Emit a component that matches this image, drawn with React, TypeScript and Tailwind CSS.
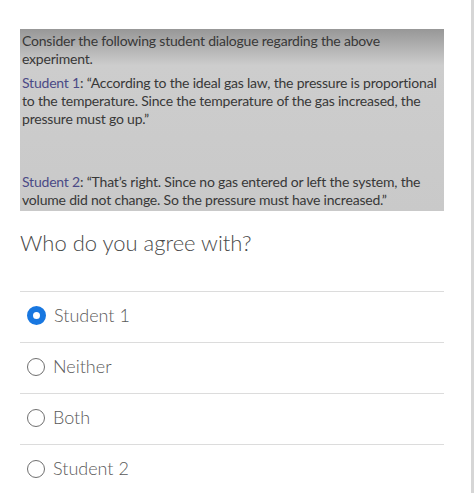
import React from "react";

const options = [
  { label: "Student 1", selected: true },
  { label: "Neither", selected: false },
  { label: "Both", selected: false },
  { label: "Student 2", selected: false },
];

function Radio({ selected }: { selected: boolean }) {
  if (selected) {
    return <span className="block h-[19px] w-[19px] shrink-0 rounded-full border-[6px] border-[#1877e0] bg-white" />;
  }
  return <span className="block h-[18px] w-[18px] shrink-0 rounded-full border-[1.5px] border-[#6f6f6f] bg-white" />;
}

export default function App() {
  return (
    <div className="flex h-[493px] w-[474px] overflow-hidden bg-white">
      <div className="w-[470px] pt-[29px]">
        <div
          className="ml-[20px] w-[424px] bg-gradient-to-b from-[#979797] via-[#cdcdcd] via-[20%] to-[#c9c9c9] pl-[2px] pr-[3px] pt-[3px] pb-[2px] text-[14px] leading-[18px] tracking-[-0.2px] text-[#383838]"
          style={{ fontFamily: "Lato, sans-serif" }}
        >
          <p>Consider the following student dialogue regarding the above experiment.</p>
          <p className="mt-[6px]">
            <span className="text-[#4b4a86]">Student 1</span>: “According to the ideal gas law, the pressure is proportional to the temperature. Since the temperature of the gas increased, the pressure must go up.”
          </p>
          <p className="mt-[45px]">
            <span className="text-[#4b4a86]">Student 2</span>: “That’s right. Since no gas entered or left the system, the volume did not change. So the pressure must have increased.”
          </p>
        </div>

        <div className="ml-[20px] w-[424px]" style={{ fontFamily: "Lato, sans-serif" }}>
          <h2 className="mt-[17px] text-[22px] font-light leading-[30px] text-[#4a4a4a]">Who do you agree with?</h2>
          <ul className="mt-[33px]">
            {options.map((o) => (
              <li key={o.label} className="flex h-[51px] items-center gap-[8px] border-t border-[#dcdcdc] pb-[3px] pl-[7px]">
                <Radio selected={o.selected} />
                <span className="text-[18px] font-light text-[#5a5a5a]">{o.label}</span>
              </li>
            ))}
          </ul>
        </div>
      </div>
      <div className="ml-[1px] w-[3px] bg-[#d6d6d6]" />
    </div>
  );
}
